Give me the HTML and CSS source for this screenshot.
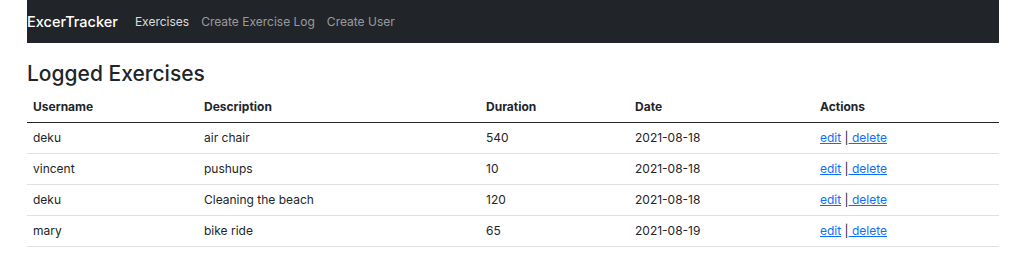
FILE: index.html
```html
<!DOCTYPE html>
<html>
    <head>
        <title>ExcerTracker</title>
        <meta charset="utf-8">
        <link rel="stylesheet" href="styles.css">
    </head>
    <body>
        <div class="container">
            <nav class="navbar">
                <a href="#" class="brand">ExcerTracker</a>
                <a href="#" class="nav-link active">Exercises</a>
                <a href="#" class="nav-link">Create Exercise Log</a>
                <a href="#" class="nav-link">Create User</a>
            </nav>
            <h3>Logged Exercises</h3>
            <table class="table">
                <thead>
                    <tr>
                        <th class="c1">Username</th>
                        <th class="c2">Description</th>
                        <th class="c3">Duration</th>
                        <th class="c4">Date</th>
                        <th>Actions</th>
                    </tr>
                </thead>
                <tbody>
                    <tr>
                        <td>deku</td>
                        <td>air chair</td>
                        <td>540</td>
                        <td>2021-08-18</td>
                        <td><a href="#">edit</a> |<a href="#"> delete</a></td>
                    </tr>
                    <tr>
                        <td>vincent</td>
                        <td>pushups</td>
                        <td>10</td>
                        <td>2021-08-18</td>
                        <td><a href="#">edit</a> |<a href="#"> delete</a></td>
                    </tr>
                    <tr>
                        <td>deku</td>
                        <td>Cleaning the beach</td>
                        <td>120</td>
                        <td>2021-08-18</td>
                        <td><a href="#">edit</a> |<a href="#"> delete</a></td>
                    </tr>
                    <tr>
                        <td>mary</td>
                        <td>bike ride</td>
                        <td>65</td>
                        <td>2021-08-19</td>
                        <td><a href="#">edit</a> |<a href="#"> delete</a></td>
                    </tr>
                </tbody>
            </table>
        </div>
    </body>
</html>
```

FILE: styles.css
```css
body{
    margin: 0;
    font-family: Inter, "Noto Sans", sans-serif;
    font-size: 12px;
    line-height: 18px;
    color: #212529;
    background-color: #fff;
}
a{
    color: #0d6efd;
}
.container{
    width: 972px;
    margin-left: 27px;
}
.navbar{
    display: flex;
    align-items: center;
    height: 43px;
    background-color: #212529;
}
.brand{
    color: #fff;
    font-size: 14.5px;
    font-weight: 500;
    text-decoration: none;
    margin-right: 11px;
}
.nav-link{
    color: rgba(255, 255, 255, 0.55);
    text-decoration: none;
    padding: 0 6px;
}
.nav-link.active{
    color: rgba(255, 255, 255, 0.85);
}
h3{
    font-size: 21px;
    font-weight: 500;
    line-height: 25px;
    margin: 18px 0 6px 0;
}
.table{
    width: 100%;
    border-collapse: collapse;
}
th{
    text-align: left;
    font-weight: 700;
}
th, td{
    padding: 6px;
    border-bottom: 1px solid #dee2e6;
}
thead th{
    border-bottom: 1.5px solid #212529;
}
.c1{
    width: 159px;
}
.c2{
    width: 270px;
}
.c3{
    width: 137px;
}
.c4{
    width: 173px;
}
```
